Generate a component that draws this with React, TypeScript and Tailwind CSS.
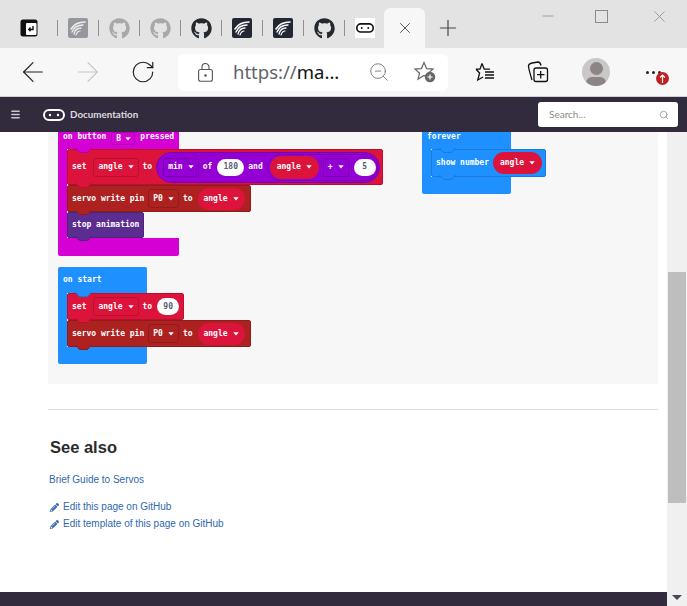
import type { ReactNode } from "react";
import { ArrowLeft, ArrowRight, Menu, Minus, Plus, RotateCw, Search, X, ZoomOut } from "lucide-react";
import { FaGithub, FaPencilAlt } from "react-icons/fa";

const WingIcon = ({ faded }: { faded?: boolean }) => (
  <svg width="20" height="20" viewBox="0 0 20 20" className={faded ? "opacity-40" : ""}>
    <rect width="20" height="20" rx="2" fill="#232733" />
    <g fill="none" stroke="#fff" strokeLinecap="round">
      <path d="M3 11 C6 6 11 4 17 4" strokeWidth="1.6" />
      <path d="M4 14 C6 9 10 7 15 7" strokeWidth="1.4" />
      <path d="M6 16 C7 12 10 10 13 10" strokeWidth="1.3" />
      <path d="M8 17 C9 14 10 13 12 13" strokeWidth="1.2" />
    </g>
  </svg>
);

const Separator = () => <div className="w-px h-[16px] bg-[#8f8f8f] shrink-0" />;

const TabIcon = ({ children }: { children: ReactNode }) => (
  <div className="w-[40px] flex justify-center items-center shrink-0">{children}</div>
);

const MicrobitLogo = ({ light, size }: { light?: boolean; size: number }) => (
  <svg width={size} height={(size * 12) / 22} viewBox="0 0 22 12">
    <rect x="1" y="1" width="20" height="10" rx="5" fill="none" stroke={light ? "#fff" : "#111"} strokeWidth="2" />
    <circle cx="7" cy="6" r="1.2" fill={light ? "#fff" : "#111"} />
    <circle cx="15" cy="6" r="1.2" fill={light ? "#fff" : "#111"} />
  </svg>
);

const TabStrip = () => (
  <div className="h-12 bg-[#e3e3e3] flex items-end shrink-0 relative">
    <div className="h-full flex items-center pt-[8px] w-[57px] justify-center shrink-0">
      <svg width="18" height="18" viewBox="0 0 18 18">
        <rect x="0.5" y="0.5" width="17" height="17" rx="2.5" fill="#111" />
        <rect x="6" y="4" width="10.5" height="12" rx="1" fill="#fff" />
        <path d="M13 7 v3.5 h-4 M10.5 8.5 L8.8 10.5 L10.5 12.2" fill="none" stroke="#111" strokeWidth="1.4" />
      </svg>
    </div>
    <div className="h-full flex items-center pt-[8px] flex-1">
      <Separator />
      <TabIcon><WingIcon faded /></TabIcon>
      <Separator />
      <TabIcon><FaGithub size={21} className="text-[#a8a8a8]" /></TabIcon>
      <Separator />
      <TabIcon><FaGithub size={21} className="text-[#a8a8a8]" /></TabIcon>
      <Separator />
      <TabIcon><FaGithub size={21} className="text-[#24292e]" /></TabIcon>
      <Separator />
      <TabIcon><WingIcon /></TabIcon>
      <Separator />
      <TabIcon><WingIcon /></TabIcon>
      <Separator />
      <TabIcon><FaGithub size={21} className="text-[#24292e]" /></TabIcon>
      <Separator />
      <div className="w-[39px] flex justify-center items-center shrink-0">
        <div className="w-5 h-5 bg-white flex items-center justify-center">
          <MicrobitLogo size={18} />
        </div>
      </div>
      <div className="w-[41px] h-[40px] -mt-[8px] self-end bg-[#f7f7f7] rounded-t-md flex items-center justify-center shrink-0">
        <X size={18} strokeWidth={1.1} className="text-[#333]" />
      </div>
      <div className="w-[46px] flex justify-center shrink-0">
        <Plus size={26} strokeWidth={1.1} className="text-[#444]" />
      </div>
      <div className="flex-1 self-start -mt-[8px] h-[32px] flex items-center text-[#8a8a8a] pl-[68px]">
        <Minus size={18} strokeWidth={1} />
        <div className="w-[13px] h-[13px] border border-[#8a8a8a] ml-[38px]" />
        <X size={19} strokeWidth={1} className="ml-[42px]" />
      </div>
    </div>
  </div>
);

const Toolbar = () => (
  <div className="h-[49px] bg-[#f7f7f7] border-b border-[#d2d2d2] flex items-center shrink-0 pl-[17px]">
    <ArrowLeft size={32} strokeWidth={0.9} className="text-[#222]" />
    <ArrowRight size={32} strokeWidth={0.9} className="text-[#c6c6c6] ml-[23px]" />
    <RotateCw size={26} strokeWidth={1.1} className="text-[#222] ml-[26px]" />
    <div className="w-[270px] h-[37px] bg-white rounded-md ml-[22px] flex items-center pl-[20px]">
      <svg width="15" height="19" viewBox="0 0 15 19" fill="none" stroke="#555" strokeWidth="1.1">
        <rect x="0.6" y="6.5" width="13.8" height="11.8" rx="2" />
        <path d="M4 6.5 V4 a3.5 3.5 0 0 1 7 0 V6.5" />
        <circle cx="7.5" cy="12.4" r="0.7" fill="#555" />
      </svg>
      <span className="ml-[20px] w-[135px] text-[18.5px] text-[#111] font-['Noto_Sans',sans-serif] whitespace-nowrap">
        <span className="text-[#5f6368]">https://</span>ma...
      </span>
      <ZoomOut size={22} strokeWidth={1} className="text-[#777]" />
      <svg width="24" height="24" viewBox="0 0 24 24" fill="none" className="ml-[23px]">
        <path d="M11 2.5 L13.6 8.6 L20 9.1 L15.2 13.2 L16.3 18 L11 15.4 L5 19.2 L6.6 13.2 L2 9.1 L8.4 8.6 Z" stroke="#666" strokeWidth="1.2" />
        <circle cx="17" cy="17" r="5.2" fill="#666" />
        <path d="M17 14.4 v5.2 M14.4 17 h5.2" stroke="#fff" strokeWidth="1.2" />
      </svg>
    </div>
    <svg width="22" height="20" viewBox="0 0 22 20" fill="none" stroke="#111" strokeWidth="1.3" className="ml-[25px]">
      <path d="M9 1.5 L11.2 7 L17 7.2 M3 7.2 L7 7.2 L9 1.5 M3 7.2 L6.6 11 L4.8 18 L10 15" />
      <path d="M12 10 h9 M12 13 h9 M12 16 h9" />
    </svg>
    <svg width="22" height="22" viewBox="0 0 22 22" fill="none" stroke="#111" strokeWidth="1.3" className="ml-[32px]">
      <path d="M5 19 C3.5 14 2 9 1.5 5.5 C1.3 3.5 3 2.5 5 2 L11 1 C12.5 1 13.5 2 14 4.5" />
      <rect x="7" y="7" width="13.5" height="13.5" rx="2" />
      <path d="M13.7 10 v7.5 M10 13.7 h7.5" />
    </svg>
    <div className="w-[28px] h-[28px] rounded-full bg-[#c9c7c7] ml-[33px] overflow-hidden flex flex-col items-center">
      <div className="w-[13px] h-[13px] rounded-full bg-[#8b8585] mt-[4px] shrink-0" />
      <div className="w-[20px] h-[12px] rounded-full bg-[#8b8585] mt-[2px] shrink-0" />
    </div>
    <div className="relative ml-[36px] flex gap-[3px]">
      <div className="w-[3px] h-[3px] rounded-full bg-[#222]" />
      <div className="w-[3px] h-[3px] rounded-full bg-[#222]" />
      <div className="w-[3px] h-[3px] rounded-full bg-[#222]" />
      <div className="absolute left-[10px] top-[1px] w-[13px] h-[13px] rounded-full bg-[#c01f1f] text-white flex items-center justify-center">
        <svg width="7" height="9" viewBox="0 0 7 9" fill="none" stroke="#fff" strokeWidth="1.2">
          <path d="M3.5 9 V1 M1 3.5 L3.5 1 L6 3.5" />
        </svg>
      </div>
    </div>
  </div>
);

const NavBar = () => (
  <div className="h-[35px] bg-[#322b3d] flex items-center shrink-0 pl-[10px] pr-[9px]">
    <Menu size={11} strokeWidth={3.2} className="text-[#c9c7cd]" />
    <div className="ml-[22px]">
      <MicrobitLogo light size={22} />
    </div>
    <span className="ml-[5px] text-[9.8px] font-bold text-[#dcdbde] font-['Lato',sans-serif]">Documentation</span>
    <div className="ml-auto w-[140px] h-[25px] bg-white rounded-[3px] flex items-center justify-between pl-[11px] pr-[9px]">
      <span className="text-[10px] text-[#8a8a8a] font-['Lato',sans-serif]">Search...</span>
      <Search size={10} strokeWidth={2} className="text-[#999]" />
    </div>
  </div>
);

const Label = ({ children }: { children: ReactNode }) => (
  <span className="text-[8px] font-bold text-white leading-none whitespace-nowrap">{children}</span>
);

const Caret = () => (
  <svg width="6" height="4" viewBox="0 0 6 4" className="shrink-0">
    <path d="M0.3 0.3 H5.7 L3 3.6 Z" fill="#fff" />
  </svg>
);

const Dropdown = ({ label, border }: { label: string; border: string }) => (
  <div className={`h-[19px] px-[4px] border rounded-[3px] flex items-center gap-[5px] ${border}`}>
    <Label>{label}</Label>
    <Caret />
  </div>
);

const Pill = ({ label, size }: { label: string; size: string }) => (
  <div className={`bg-white rounded-full flex items-center justify-center text-[8px] font-bold text-[#575e75] leading-none ${size}`}>
    {label}
  </div>
);

const VarPill = ({ size }: { size: string }) => (
  <div className={`rounded-full flex items-center justify-center gap-[5px] bg-[#dc143c] ${size}`}>
    <Label>angle</Label>
    <Caret />
  </div>
);

// the little connector tab that a block pushes into the one under it
const ConnectorTab = ({ fill, stroke, className }: { fill: string; stroke: string; className: string }) => (
  <svg width="17" height="5" viewBox="0 0 17 5" className={`absolute z-10 ${className}`}>
    <path d="M0.5 0 L4.5 4.5 H12.5 L16.5 0" fill={fill} stroke={stroke} strokeWidth="1" />
  </svg>
);

const MAGENTA = "#d400d4";
const BLUE = "#1e90ff";

const Block = ({ bg, children, className }: { bg: string; children: ReactNode; className: string }) => (
  <div className={`relative flex items-center rounded-[2px] border pl-[4px] ${bg} ${className}`}>{children}</div>
);

const ServoBlock = () => (
  <Block bg="bg-[#ae2121]" className="h-[27px] w-[184px] border-[#8f1b1b] gap-[4px]">
    <Label>servo write pin</Label>
    <Dropdown label="P0" border="border-[#8f1b1b]" />
    <Label>to</Label>
    <div className="ml-[1px]"><VarPill size="w-[47px] h-[22px]" /></div>
    <ConnectorTab fill="#ae2121" stroke="#8f1b1b" className="left-[7px] -bottom-[4px]" />
  </Block>
);

const ButtonStack = () => (
  <div className="w-[325px]">
    <div className="relative h-[17px] w-[121px] bg-[#d400d4] pl-[5px] pt-[1px] flex items-start gap-[5px]">
      <Label>on button</Label>
      <div className="h-[13px] w-[24px] -mt-[1px] px-[4px] border border-[#b000b0] rounded-b-[3px] flex items-center gap-[4px]">
        <Label>B</Label>
        <Caret />
      </div>
      <Label>pressed</Label>
      <ConnectorTab fill={MAGENTA} stroke="#aa00aa" className="left-[17px] -bottom-[4px]" />
    </div>
    <div className="flex flex-col border-l-[9px] border-[#d400d4] w-fit">
      <Block bg="bg-[#dc143c]" className="h-[36px] w-[316px] border-[#b8102f] gap-[4px]">
        <Label>set</Label>
        <div className="ml-[3px]"><Dropdown label="angle" border="border-[#b8102f]" /></div>
        <Label>to</Label>
        <div className="h-[31px] w-[224px] shrink-0 rounded-full bg-[#9400d3] border border-[#7a00ad] flex items-center pl-[6px] gap-[4px]">
          <Dropdown label="min" border="border-[#7a00ad]" />
          <Label>of</Label>
          <Pill label="180" size="ml-[1px] w-[27px] h-[17px]" />
          <Label>and</Label>
          <div className="h-[27px] w-[111px] shrink-0 rounded-full border border-[#7a00ad] flex items-center">
            <VarPill size="w-[49px] h-[23px] ml-[2px]" />
            <div className="ml-[4px]"><Dropdown label="+" border="border-[#7a00ad]" /></div>
            <Pill label="5" size="ml-[5px] w-[22px] h-[17px]" />
          </div>
        </div>
        <ConnectorTab fill="#dc143c" stroke="#b8102f" className="left-[7px] -bottom-[4px]" />
      </Block>
      <ServoBlock />
      <Block bg="bg-[#5c2d91]" className="h-[26px] w-[77px] border-[#4a2475]">
        <Label>stop animation</Label>
        <ConnectorTab fill="#5c2d91" stroke="#4a2475" className="left-[7px] -bottom-[4px]" />
      </Block>
    </div>
    <div className="h-[18px] w-[121px] bg-[#d400d4] rounded-b-[2px]" />
  </div>
);

const StartStack = () => (
  <div className="mt-[11px] w-fit">
    <div className="relative h-[26px] w-[89px] bg-[#1e90ff] rounded-t-[2px] pl-[5px] pt-[9px] flex items-start">
      <Label>on start</Label>
      <ConnectorTab fill={BLUE} stroke="#1a7ad8" className="left-[17px] -bottom-[4px]" />
    </div>
    <div className="flex flex-col border-l-[9px] border-[#1e90ff] w-fit">
      <Block bg="bg-[#dc143c]" className="h-[27px] w-[117px] border-[#b8102f] gap-[4px]">
        <Label>set</Label>
        <div className="ml-[3px]"><Dropdown label="angle" border="border-[#b8102f]" /></div>
        <Label>to</Label>
        <Pill label="90" size="ml-[1px] w-[22px] h-[17px]" />
        <ConnectorTab fill="#dc143c" stroke="#b8102f" className="left-[7px] -bottom-[4px]" />
      </Block>
      <ServoBlock />
    </div>
    <div className="h-[17px] w-[89px] bg-[#1e90ff] rounded-b-[2px]" />
  </div>
);

const ForeverStack = () => (
  <div className="ml-[39px] w-fit">
    <div className="relative h-[17px] w-[89px] bg-[#1e90ff] pl-[5px] pt-[1px] flex items-start">
      <Label>forever</Label>
      <ConnectorTab fill={BLUE} stroke="#1a7ad8" className="left-[17px] -bottom-[4px]" />
    </div>
    <div className="border-l-[9px] border-[#1e90ff] w-fit">
      <Block bg="bg-[#1e90ff]" className="h-[28px] w-[115px] border-[#1a7ad8] gap-[4px]">
        <Label>show number</Label>
        <VarPill size="w-[49px] h-[22px]" />
        <ConnectorTab fill={BLUE} stroke="#1a7ad8" className="left-[7px] -bottom-[4px]" />
      </Block>
    </div>
    <div className="h-[17px] w-[89px] bg-[#1e90ff] rounded-b-[2px]" />
  </div>
);

const Content = () => (
  <div className="flex-1 flex flex-col min-w-0 bg-white">
    <div className="flex-1 pl-[48px] pr-[9px]">
      <div className="h-[252px] bg-[#f7f7f7] pl-[10px] flex font-['DejaVu_Sans_Mono',monospace]">
        <div>
          <ButtonStack />
          <StartStack />
        </div>
        <ForeverStack />
      </div>
      <div className="mt-[25px] h-px bg-[#dedede]" />
      <h2 className="mt-[27px] ml-[2px] text-[16.5px] leading-[20px] font-bold text-[#2b2b2b] font-['Liberation_Sans',sans-serif]">See also</h2>
      <div className="font-['Liberation_Sans',sans-serif] text-[10px] text-[#2f68b0]">
        <p className="mt-[17px] ml-[1px] leading-[12px]">Brief Guide to Servos</p>
        <p className="mt-[15px] ml-[2px] leading-[12px] flex items-center gap-[4px]">
          <FaPencilAlt size={9} />
          Edit this page on GitHub
        </p>
        <p className="mt-[5px] ml-[2px] leading-[12px] flex items-center gap-[4px]">
          <FaPencilAlt size={9} />
          Edit template of this page on GitHub
        </p>
      </div>
    </div>
    <div className="h-[14px] bg-[#322b3d] shrink-0" />
  </div>
);

const Scrollbar = () => (
  <div className="w-[20px] bg-[#f0f0f0] shrink-0 flex flex-col items-center">
    <div className="mt-[140px] h-[231px] w-[18px] bg-[#bebebe]" />
    <div className="mt-auto mb-[6px] w-0 h-0 border-x-[5px] border-x-transparent border-t-[5px] border-t-[#4a4458]" />
  </div>
);

export default function App() {
  return (
    <div className="w-[687px] h-[606px] overflow-hidden flex flex-col bg-white">
      <TabStrip />
      <Toolbar />
      <NavBar />
      <div className="flex-1 flex min-h-0">
        <Content />
        <Scrollbar />
      </div>
    </div>
  );
}
